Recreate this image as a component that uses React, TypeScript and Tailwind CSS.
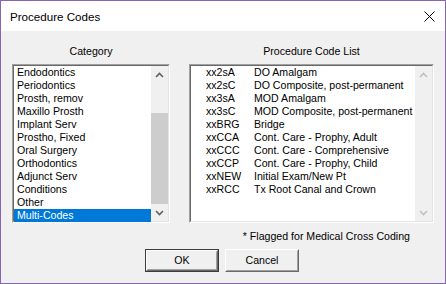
import React from "react";

const categories = [
  "Endodontics",
  "Periodontics",
  "Prosth, remov",
  "Maxillo Prosth",
  "Implant Serv",
  "Prostho, Fixed",
  "Oral Surgery",
  "Orthodontics",
  "Adjunct Serv",
  "Conditions",
  "Other",
  "Multi-Codes",
];

const codes: [string, string][] = [
  ["xx2sA", "DO Amalgam"],
  ["xx2sC", "DO Composite, post-permanent"],
  ["xx3sA", "MOD Amalgam"],
  ["xx3sC", "MOD Composite, post-permanent"],
  ["xxBRG", "Bridge"],
  ["xxCCA", "Cont. Care - Prophy, Adult"],
  ["xxCCC", "Cont. Care - Comprehensive"],
  ["xxCCP", "Cont. Care - Prophy, Child"],
  ["xxNEW", "Initial Exam/New Pt"],
  ["xxRCC", "Tx Root Canal and Crown"],
];

function Chevron({ up, color }: { up: boolean; color: string }) {
  return (
    <svg width="9" height="6" viewBox="0 0 9 6">
      <path
        d={up ? "M1 5 L4.5 1.5 L8 5" : "M1 1 L4.5 4.5 L8 1"}
        fill="none"
        stroke={color}
        strokeWidth="1.6"
      />
    </svg>
  );
}

function Scrollbar({ enabled }: { enabled: boolean }) {
  const c = enabled ? "#606060" : "#bfbfbf";
  return (
    <div className="w-[17px] h-full flex flex-col bg-[#f0f0f0] shrink-0">
      <div className="h-[17px] flex items-center justify-center">
        <Chevron up color={c} />
      </div>
      <div className="flex-1 flex flex-col">
        {enabled && (
          <>
            <div className="h-[30px]" />
            <div className="flex-1 bg-[#cdcdcd]" />
          </>
        )}
      </div>
      <div className="h-[17px] flex items-center justify-center">
        <Chevron up={false} color={c} />
      </div>
    </div>
  );
}

function Sunken({ className, children }: { className: string; children: React.ReactNode }) {
  return (
    <div className={`border border-t-[#a0a0a0] border-l-[#a0a0a0] border-r-white border-b-white ${className}`}>
      <div className="w-full h-full border border-t-[#696969] border-l-[#696969] border-r-[#e3e3e3] border-b-[#e3e3e3] bg-white flex">
        {children}
      </div>
    </div>
  );
}

function Button({ label, isDefault }: { label: string; isDefault?: boolean }) {
  return (
    <div
      className={`w-[74px] h-[23px] ${isDefault ? "border border-[#3c3c3c]" : ""}`}
    >
      <div className="w-full h-full border border-t-white border-l-white border-r-[#696969] border-b-[#696969]">
        <div className="w-full h-full border border-t-[#f0f0f0] border-l-[#f0f0f0] border-r-[#a0a0a0] border-b-[#a0a0a0] bg-[#f0f0f0] flex items-center justify-center text-black">
          {label}
        </div>
      </div>
    </div>
  );
}

export default function App() {
  return (
    <div
      className="w-[446px] h-[284px] border border-[#8764b8] flex flex-col bg-[#f0f0f0] text-black text-[10.6px] leading-[13px]"
      style={{ fontFamily: '"Liberation Sans", Arial, sans-serif' }}
    >
      <div className="h-[30px] bg-white flex items-center justify-between pl-[9px] pr-[10px] shrink-0">
        <span className="text-[11.6px]">Procedure Codes</span>
        <svg width="11" height="11" viewBox="0 0 11 11">
          <path d="M0.5 0.5 L10.5 10.5 M10.5 0.5 L0.5 10.5" stroke="#000" strokeWidth="1" />
        </svg>
      </div>
      <div className="flex-1 flex flex-col pt-[14px]">
        <div className="flex pl-[11px] gap-[19px]">
          <div className="w-[158px] flex flex-col">
            <div className="h-[13px] text-center mb-[6px]">Category</div>
            <Sunken className="w-[158px] h-[159px]">
              <div className="flex-1 flex flex-col">
                {categories.map((c, i) => (
                  <div
                    key={c}
                    className={`h-[13px] pl-[3px] whitespace-nowrap ${
                      i === categories.length - 1 ? "bg-[#0078d7] text-white" : ""
                    }`}
                  >
                    {c}
                  </div>
                ))}
              </div>
              <Scrollbar enabled />
            </Sunken>
          </div>
          <div className="w-[245px] flex flex-col">
            <div className="h-[13px] text-center mb-[6px]">Procedure Code List</div>
            <Sunken className="w-[245px] h-[159px]">
              <div className="flex-1 flex flex-col pl-[15px]">
                {codes.map(([code, desc]) => (
                  <div key={code} className="h-[13px] flex whitespace-nowrap">
                    <span className="w-[48px] shrink-0">{code}</span>
                    <span>{desc}</span>
                  </div>
                ))}
              </div>
              <Scrollbar enabled={false} />
            </Sunken>
          </div>
        </div>
        <div className="h-[13px] mt-[7px] flex justify-end pr-[35px]">
          * Flagged for Medical Cross Coding
        </div>
        <div className="flex justify-center gap-[6px] mt-[6px] pr-[2px]">
          <Button label="OK" isDefault />
          <Button label="Cancel" />
        </div>
      </div>
    </div>
  );
}
